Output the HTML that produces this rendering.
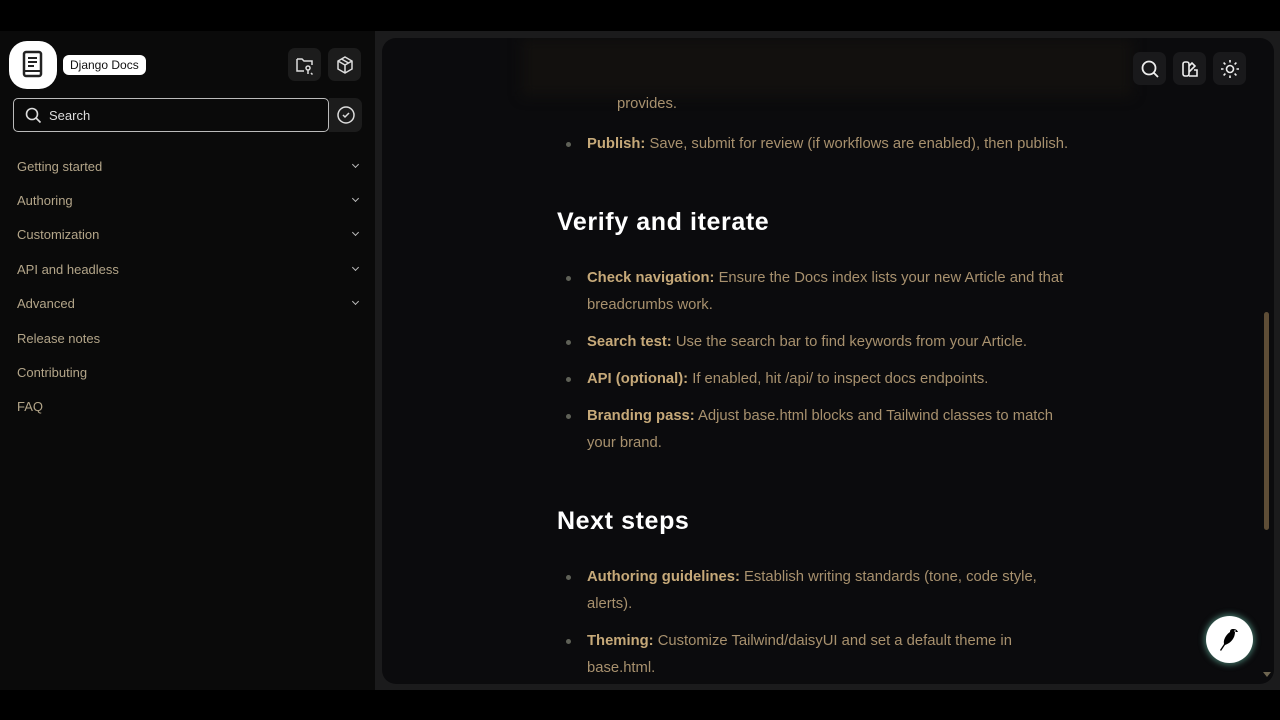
<!DOCTYPE html>
<html><head><meta charset="utf-8"><style>
*{margin:0;padding:0;box-sizing:border-box}
body{width:1280px;height:720px;background:#000;font-family:"Liberation Sans",sans-serif;position:relative;overflow:hidden}
#app{position:absolute;left:0;top:31px;width:1280px;height:659px;background:#1b1b1c}
#side{position:absolute;left:0;top:0;width:375px;height:659px;background:#0a0a0a}
#main{position:absolute;left:382px;top:7px;width:892px;height:646px;background:#0b0b0d;border-radius:14px;overflow:hidden}
.logo{position:absolute;left:9px;top:10px;width:48px;height:48px;background:#fff;border-radius:18px}
.tag{position:absolute;left:63px;top:24px;background:#fff;color:#111;font-size:12px;padding:3px 7px;border-radius:6px}
.ib{position:absolute;width:33px;height:33px;background:#1c1c1c;border-radius:7px;display:flex;align-items:center;justify-content:center}
.search{position:absolute;left:13px;top:67px;width:316px;height:34px;border:1px solid #bbb;border-radius:5px;color:#ddd;font-size:13px;padding:9px 0 0 35px}
.nav{position:absolute;left:17px;color:#b3a589;font-size:13px}
.chev{position:absolute;left:353px;width:5px;height:5px;border-right:1.5px solid #bbb;border-bottom:1.5px solid #bbb;transform:rotate(45deg)}
.c{position:absolute;left:175px;width:520px;color:#a8916e;font-size:14.8px;line-height:27px}
.c b{color:#c6a979}
.dot{position:absolute;left:-21px;top:11px;width:5px;height:5px;border-radius:50%;background:#5f6157}
h2{position:absolute;left:175px;color:#fff;font-size:25px;font-weight:bold;letter-spacing:0.6px}
</style></head><body>
<div id="app">
<div id="side">
<div class="logo"><svg width="48" height="48" viewBox="0 0 48 48"><rect x="15" y="11" width="17" height="24" rx="2" fill="none" stroke="#222" stroke-width="2.5"/><path d="M19 17h9M19 21h9M19 25h6M15 30h17" stroke="#222" stroke-width="2"/></svg></div>
<div class="tag">Django Docs</div>
<div class="ib" style="left:288px;top:17px"><svg width="20" height="20" viewBox="0 0 20 20" fill="none" stroke="#ddd" stroke-width="1.5"><path d="M2 4h5l2 2h8v4M2 4v12h7"/><circle cx="13" cy="13" r="2"/><path d="M13 15v4M16 18l1.5 1.5"/></svg></div>
<div class="ib" style="left:328px;top:17px"><svg width="20" height="20" viewBox="0 0 20 20" fill="none" stroke="#ddd" stroke-width="1.5"><path d="M10 2l7 4v8l-7 4-7-4V6zM3 6l7 4 7-4M10 10v8M6.5 4l7 4"/></svg></div>
<div class="search"><svg style="position:absolute;left:11px;top:8px" width="17" height="17" viewBox="0 0 17 17" fill="none" stroke="#ddd" stroke-width="1.6"><circle cx="7" cy="7" r="5.5"/><path d="M11 11l4.5 4.5"/></svg>Search</div>
<div class="ib" style="left:329px;top:67px;height:34px;border-radius:0 7px 7px 0"><svg width="20" height="20" viewBox="0 0 20 20" fill="none" stroke="#ddd" stroke-width="1.5"><circle cx="10" cy="10" r="8"/><path d="M7 10l2 2 4-4"/></svg></div>
<div class="nav" style="top:128px">Getting started</div><div class="chev" style="top:131px"></div>
<div class="nav" style="top:162px">Authoring</div><div class="chev" style="top:165px"></div>
<div class="nav" style="top:196px">Customization</div><div class="chev" style="top:199px"></div>
<div class="nav" style="top:231px">API and headless</div><div class="chev" style="top:234px"></div>
<div class="nav" style="top:265px">Advanced</div><div class="chev" style="top:268px"></div>
<div class="nav" style="top:300px">Release notes</div>
<div class="nav" style="top:334px">Contributing</div>
<div class="nav" style="top:368px">FAQ</div>
</div>
<div id="main">
<div style="position:absolute;left:140px;top:0;width:610px;height:58px;background:#12100e;filter:blur(6px)"></div>
<div class="c" style="top:53px;left:235px">provides.</div>
<div class="c" style="top:93px;left:205px"><span class="dot"></span><b>Publish:</b> Save, submit for review (if workflows are enabled), then publish.</div>
<h2 style="top:170px">Verify and iterate</h2>
<div class="c" style="top:227px;left:205px;width:490px"><span class="dot"></span><b>Check navigation:</b> Ensure the Docs index lists your new Article and that breadcrumbs work.</div>
<div class="c" style="top:291px;left:205px"><span class="dot"></span><b>Search test:</b> Use the search bar to find keywords from your Article.</div>
<div class="c" style="top:328px;left:205px"><span class="dot"></span><b>API (optional):</b> If enabled, hit /api/ to inspect docs endpoints.</div>
<div class="c" style="top:365px;left:205px;width:490px"><span class="dot"></span><b>Branding pass:</b> Adjust base.html blocks and Tailwind classes to match your brand.</div>
<h2 style="top:469px">Next steps</h2>
<div class="c" style="top:526px;left:205px;width:490px"><span class="dot"></span><b>Authoring guidelines:</b> Establish writing standards (tone, code style, alerts).</div>
<div class="c" style="top:590px;left:205px;width:490px"><span class="dot"></span><b>Theming:</b> Customize Tailwind/daisyUI and set a default theme in base.html.</div>
<div class="ib" style="left:751px;top:14px;background:#19191b"><svg width="20" height="20" viewBox="0 0 20 20" fill="none" stroke="#eee" stroke-width="1.8"><circle cx="9" cy="9" r="6.5"/><path d="M14 14l4 4"/></svg></div>
<div class="ib" style="left:791px;top:14px;background:#19191b"><svg width="20" height="20" viewBox="0 0 20 20" fill="none" stroke="#eee" stroke-width="1.6"><rect x="3" y="3" width="6" height="14" rx="2"/><path d="M9 7l3-3 3 3-6 6M9 17h8v-6h-3"/></svg></div>
<div class="ib" style="left:831px;top:14px;background:#19191b"><svg width="20" height="20" viewBox="0 0 20 20" fill="none" stroke="#eee" stroke-width="1.6"><circle cx="10" cy="10" r="3.5"/><path d="M10 1v2.5M10 16.5V19M1 10h2.5M16.5 10H19M3.6 3.6l1.8 1.8M14.6 14.6l1.8 1.8M3.6 16.4l1.8-1.8M14.6 5.4l1.8-1.8"/></svg></div>
<div style="position:absolute;left:882px;top:274px;width:5px;height:218px;background:#5e4d36;border-radius:3px"></div>
<div style="position:absolute;left:881px;top:634px;width:0;height:0;border-left:4px solid transparent;border-right:4px solid transparent;border-top:5px solid #6e6550"></div>
<div style="position:absolute;left:824px;top:578px;width:47px;height:47px;border-radius:50%;background:#fff;box-shadow:0 0 6px 2px #3f6b60;display:flex;align-items:center;justify-content:center"><svg width="24" height="26" viewBox="0 0 24 26"><path d="M15 2c3 0 4 1 5 3l-3 0c0 6-4 11-10 13l-4 6-1-1 4-6c-1-5 3-10 6-12 0-2 1-3 3-3z" fill="#000"/><circle cx="17" cy="4" r="0.8" fill="#fff"/></svg></div>
</div>
</div>
</body></html>
